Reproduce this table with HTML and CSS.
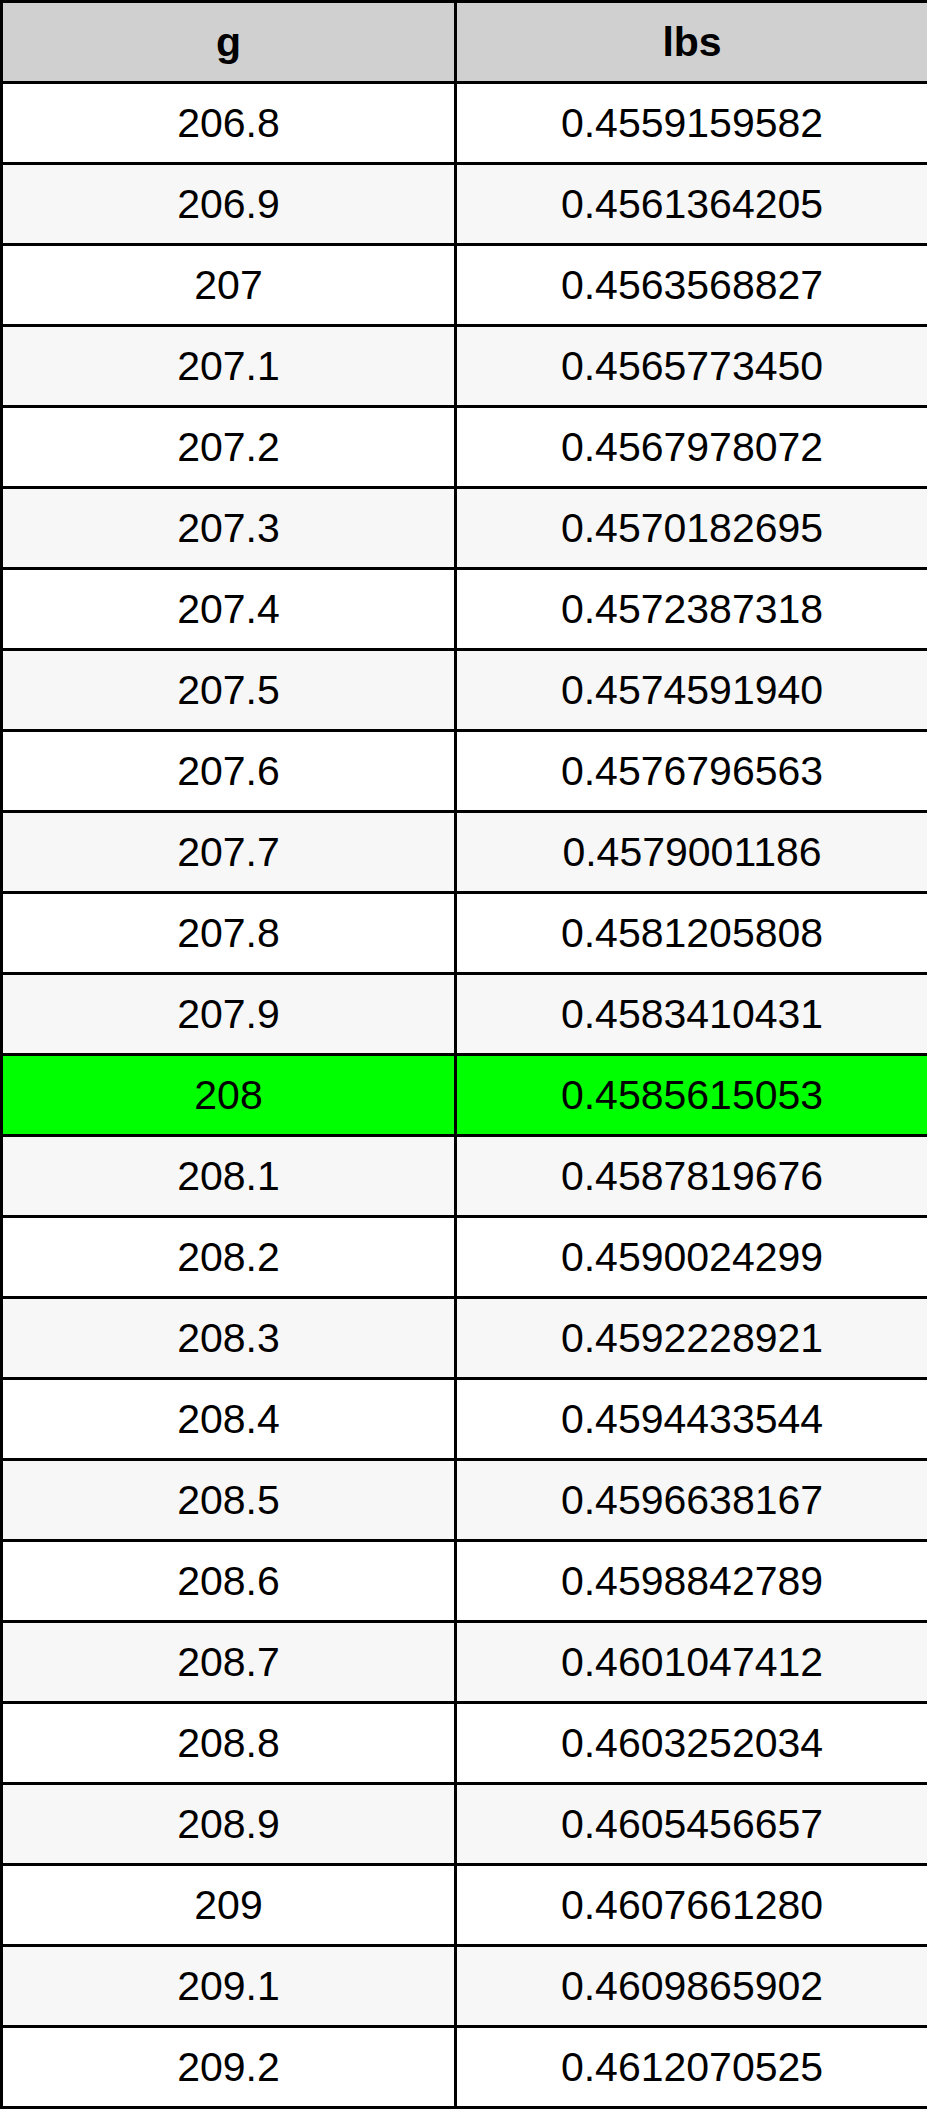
FILE: index.html
```html
<!DOCTYPE html>
<html>
<head>
<meta charset="utf-8">
<link rel="stylesheet" href="styles.css">
</head>
<body>
<div class="table">
  <div class="cell head">g</div><div class="cell head">lbs</div>
  <div class="cell">206.8</div><div class="cell">0.4559159582</div>
  <div class="cell alt">206.9</div><div class="cell alt">0.4561364205</div>
  <div class="cell">207</div><div class="cell">0.4563568827</div>
  <div class="cell alt">207.1</div><div class="cell alt">0.4565773450</div>
  <div class="cell">207.2</div><div class="cell">0.4567978072</div>
  <div class="cell alt">207.3</div><div class="cell alt">0.4570182695</div>
  <div class="cell">207.4</div><div class="cell">0.4572387318</div>
  <div class="cell alt">207.5</div><div class="cell alt">0.4574591940</div>
  <div class="cell">207.6</div><div class="cell">0.4576796563</div>
  <div class="cell alt">207.7</div><div class="cell alt">0.4579001186</div>
  <div class="cell">207.8</div><div class="cell">0.4581205808</div>
  <div class="cell alt">207.9</div><div class="cell alt">0.4583410431</div>
  <div class="cell hl">208</div><div class="cell hl">0.4585615053</div>
  <div class="cell alt">208.1</div><div class="cell alt">0.4587819676</div>
  <div class="cell">208.2</div><div class="cell">0.4590024299</div>
  <div class="cell alt">208.3</div><div class="cell alt">0.4592228921</div>
  <div class="cell">208.4</div><div class="cell">0.4594433544</div>
  <div class="cell alt">208.5</div><div class="cell alt">0.4596638167</div>
  <div class="cell">208.6</div><div class="cell">0.4598842789</div>
  <div class="cell alt">208.7</div><div class="cell alt">0.4601047412</div>
  <div class="cell">208.8</div><div class="cell">0.4603252034</div>
  <div class="cell alt">208.9</div><div class="cell alt">0.4605456657</div>
  <div class="cell">209</div><div class="cell">0.4607661280</div>
  <div class="cell alt">209.1</div><div class="cell alt">0.4609865902</div>
  <div class="cell">209.2</div><div class="cell">0.4612070525</div>
</div>
</body>
</html>
```
FILE: styles.css
```css
html, body {
  margin: 0;
  padding: 0;
  background: #ffffff;
}
.table {
  display: grid;
  grid-template-columns: 451px 470px;
  grid-auto-rows: 78px;
  gap: 3px;
  padding: 3px;
  width: 921px;
  background: #000000;
  font-family: "Liberation Sans", Arial, sans-serif;
  font-size: 41px;
  color: #000000;
}
.cell {
  display: flex;
  align-items: center;
  justify-content: center;
  background: #ffffff;
}
.cell.alt {
  background: #f7f7f7;
}
.cell.head {
  background: #d0d0d0;
  font-weight: bold;
}
.cell.hl {
  background: #00ff00;
}
```
